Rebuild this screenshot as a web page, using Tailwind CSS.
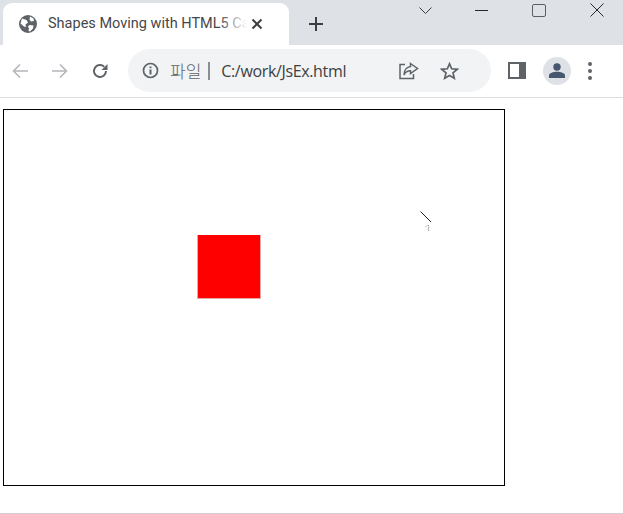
<!DOCTYPE html>
<html lang="ko">
<head>
    <meta charset="UTF-8">
    <title>Shapes Moving with HTML5 Canvas</title>
    <script src="https://cdn.jsdelivr.net/npm/@tailwindcss/browser@4"></script>
</head>
<body class="bg-white h-[514px] w-[623px] overflow-hidden flex flex-col font-['Roboto','Noto_Sans_CJK_KR',sans-serif]">

    <!-- tab strip -->
    <div class="relative h-[45px] bg-[#dee1e6] flex items-end pl-[3px] shrink-0">
        <div class="w-[286px] h-[42px] bg-white rounded-t-[9px] flex items-center pl-[16px] pb-[1px]">
            <svg class="w-[18px] h-[18px] shrink-0" viewBox="0 0 18 18">
                <circle cx="9" cy="9" r="9" fill="#5f6368"/>
                <path d="M3 3.5 7.5 5 9 7.5 6.5 9.5 7 12 5 11.5 1.5 8.5ZM11 1.5 14.5 3.5 15 6 12 6.5 10.5 4.5ZM10.5 10 14.5 10.5 14 13.5 11 16.5 9.5 16 10 13.5 9 11.5Z" fill="#fff"/>
            </svg>
            <div class="relative ml-[11px] w-[199px] overflow-hidden whitespace-nowrap text-[14.5px] leading-[20px] text-[#45474a]">
                Shapes Moving with HTML5 Canvas
                <div class="absolute inset-y-0 right-0 w-[28px] bg-gradient-to-r from-white/0 to-white"></div>
            </div>
            <svg class="ml-[4px] w-[12px] h-[12px]" viewBox="0 0 12 12" fill="none" stroke="#3c4043" stroke-width="2">
                <path d="M1.5 1.5 10.5 10.5M10.5 1.5 1.5 10.5"/>
            </svg>
        </div>
        <svg class="ml-[19px] mb-[13px] w-[16px] h-[16px]" viewBox="0 0 16 16" fill="none" stroke="#3c4043" stroke-width="2">
            <path d="M8 1V15M1 8H15"/>
        </svg>

        <!-- window controls -->
        <div class="absolute top-0 right-0 flex items-start">
            <svg class="absolute top-[6px] right-[191px] w-[13px] h-[9px]" viewBox="0 0 13 9" fill="none" stroke="#3c4043">
                <path d="M.5 1.5 6.5 7.5 12.5 1.5"/>
            </svg>
            <div class="absolute top-[10px] right-[135px] w-[13px] h-px bg-[#26282b]"></div>
            <div class="absolute top-[4px] right-[77px] w-[14px] h-[13px] border border-[#5b5e62] rounded-[2px]"></div>
            <svg class="absolute top-[3px] right-[19px] w-[14px] h-[14px]" viewBox="0 0 14 14" fill="none" stroke="#26282b">
                <path d="M.5.5 13.5 13.5M13.5.5.5 13.5"/>
            </svg>
        </div>
    </div>

    <!-- toolbar -->
    <div class="h-[53px] bg-white border-b border-[#dadce0] flex items-center shrink-0 pb-[1px]">
        <svg class="ml-[12px] w-[16px] h-[16px]" viewBox="0 0 16 16" fill="none" stroke="#b4b7bb" stroke-width="1.6">
            <path d="M16 8H1.5M8 1.5 1.5 8 8 14.5"/>
        </svg>
        <svg class="ml-[24px] w-[16px] h-[16px]" viewBox="0 0 16 16" fill="none" stroke="#b4b7bb" stroke-width="1.6">
            <path d="M0 8H14.5M8 1.5 14.5 8 8 14.5"/>
        </svg>
        <svg class="ml-[24px] w-[16px] h-[16px]" viewBox="0 0 16 16" fill="none">
            <path d="M14 8A6 6 0 1 1 12.2 3.7" stroke="#5f6368" stroke-width="2"/>
            <path d="M15.5 1V7H9.5Z" fill="#5f6368"/>
        </svg>

        <!-- omnibox -->
        <div class="ml-[20px] w-[363px] h-[43px] rounded-full bg-[#f1f3f4] flex items-center pl-[14px]">
            <svg class="w-[17px] h-[17px] shrink-0" viewBox="0 0 17 17" fill="none">
                <circle cx="8.5" cy="8.5" r="7" stroke="#5f6368" stroke-width="1.7"/>
                <path d="M8.5 7.5V12.5" stroke="#5f6368" stroke-width="2"/>
                <path d="M8.5 4.5V6.2" stroke="#5f6368" stroke-width="2"/>
            </svg>
            <span class="ml-[11px] text-[17px] leading-[22px] text-[#5f6368] font-['Noto_Sans_CJK_KR',sans-serif] font-light">파일</span>
            <div class="ml-[7px] w-[2px] h-[18px] bg-[#8b8e92]"></div>
            <span class="ml-[11px] text-[16px] leading-[22px] text-[#3c4043] font-['Open_Sans',sans-serif] tracking-[-0.35px]">C:/work/JsEx.html</span>
            <svg class="ml-[53px] w-[20px] h-[18px] shrink-0" viewBox="0 0 20 18" fill="none" stroke="#5f6368" stroke-width="1.5">
                <path d="M6 2.5H1V16.5H14.5V12"/>
                <path d="M11.5 1.5 18.5 6.5 11.5 11.5V8.8C8 8.8 6 10.5 5 13 5 8 8 5 11.5 4.5Z"/>
            </svg>
            <svg class="ml-[21px] w-[19px] h-[18px] shrink-0" viewBox="0 0 19 18" fill="none" stroke="#5f6368" stroke-width="1.7">
                <path d="M9.5 1.8 11.7 6.8 17.2 7.3 13 10.9 14.3 16.2 9.5 13.4 4.7 16.2 6 10.9 1.8 7.3 7.3 6.8Z"/>
            </svg>
        </div>

        <svg class="ml-[17px] w-[18px] h-[17px]" viewBox="0 0 18 17">
            <path d="M0 0H18V17H0Z" fill="#5f6368"/>
            <path d="M2 2H11V15H2Z" fill="#fff"/>
        </svg>
        <div class="ml-[17px] w-[28px] h-[28px] rounded-full bg-[#dee1e6] flex items-center justify-center overflow-hidden">
            <svg class="w-[16px] h-[15px]" viewBox="0 0 16 15" fill="#45566e">
                <circle cx="8" cy="4" r="3.7"/>
                <path d="M0 15V12.5C0 10 4.5 8.8 8 8.8S16 10 16 12.5V15Z"/>
            </svg>
        </div>
        <div class="ml-[17px] flex flex-col gap-[3px]">
            <div class="w-[4px] h-[4px] rounded-full bg-[#5f6368]"></div>
            <div class="w-[4px] h-[4px] rounded-full bg-[#5f6368]"></div>
            <div class="w-[4px] h-[4px] rounded-full bg-[#5f6368]"></div>
        </div>
    </div>

    <!-- page -->
    <main class="flex-1 pt-[11px] pl-[3px] border-b border-[#cfcfcf]">
        <div class="relative w-[502px] h-[377px] border border-black">
            <div class="absolute left-[193px] top-[125px] w-[64px] h-[64px] bg-[#ff0000] border border-[#e8a8a8] border-t-0"></div>
            <!-- mouse cursor caught mid-frame -->
            <svg class="absolute left-[416px] top-[101px] w-[14px] h-[22px]" viewBox="0 0 14 22" fill="none">
                <path d="M.5.5 11 11" stroke="#222"/>
                <path d="M5 16 7 15" stroke="#ccc"/>
                <path d="M8 14 9 16 8 18 9 20" stroke="#555" stroke-dasharray="1 1"/>
            </svg>
        </div>
    </main>
</body>
</html>
